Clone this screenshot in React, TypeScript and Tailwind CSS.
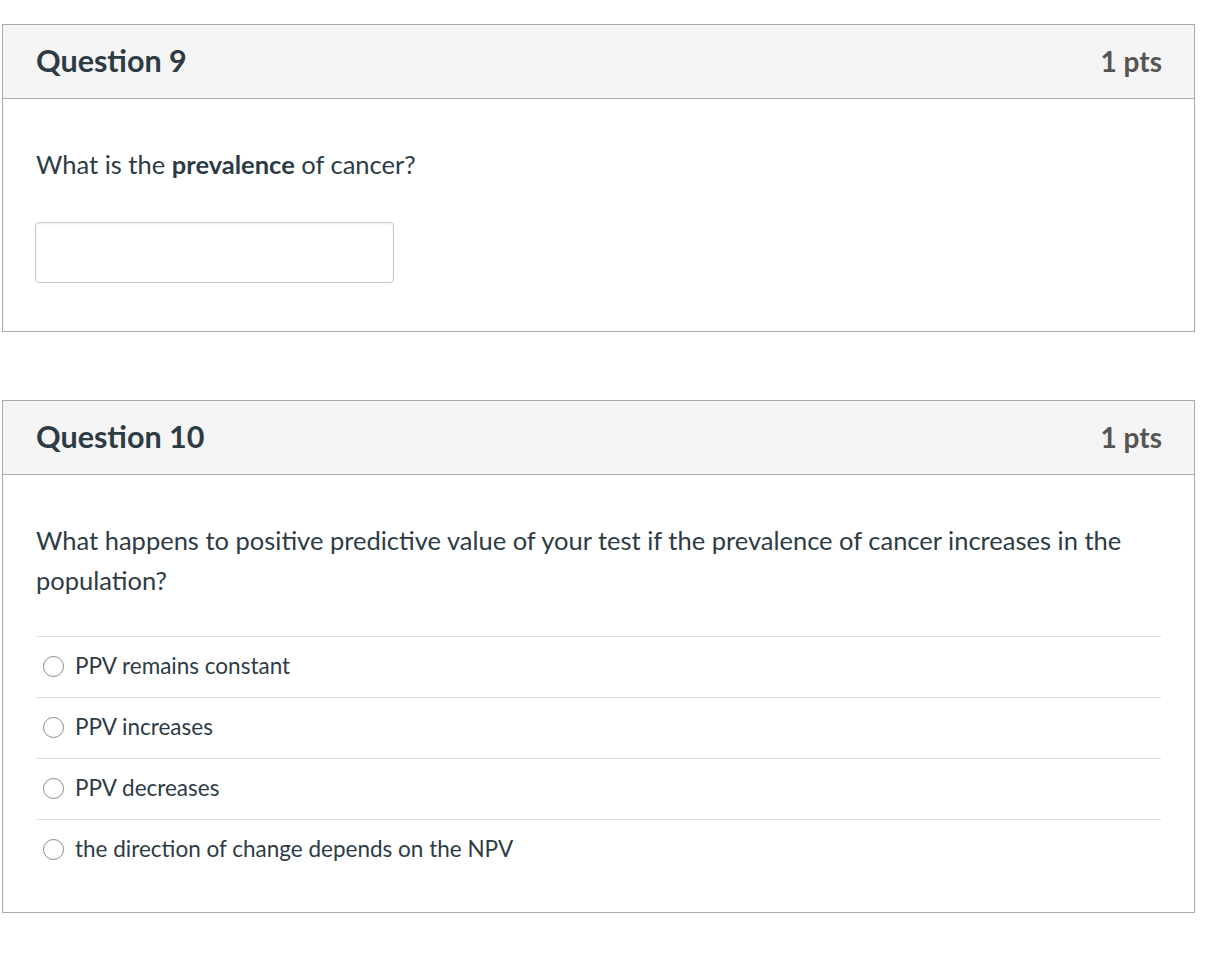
import React from "react";

function Radio({ label }: { label: string }) {
  return (
    <div className="flex h-[61px] items-center border-t border-[#dddddd] pb-[3px] pl-[7px]">
      <span className="mr-[11px] mt-[2px] inline-block h-[21px] w-[21px] shrink-0 rounded-full border border-[#8a8a8a] bg-white" />
      <span className="text-[22.5px] text-[#2d3b45]">{label}</span>
    </div>
  );
}

function Header({ title }: { title: string }) {
  return (
    <div className="flex h-[74px] items-center justify-between border-b border-[#aaaaaa] bg-[#f5f5f5] pb-[1px] pl-[33px] pr-[32px]">
      <h2 className="text-[30.5px] font-bold text-[#2d3b45]">{title}</h2>
      <span className="text-[28px] font-bold text-[#555555]">1 pts</span>
    </div>
  );
}

export default function App() {
  return (
    <div className="min-h-[962px] bg-white pt-[24px] pl-[2px]" style={{ fontFamily: "Lato, 'Noto Sans', sans-serif" }}>
      <div className="w-[1193px] border border-[#aaaaaa]">
        <Header title="Question 9" />
        <div className="px-[33px] pt-[45px] pb-[48px]">
          <p className="text-[25.5px] leading-[40px] text-[#2d3b45]">
            What is the <strong className="font-bold">prevalence</strong> of cancer?
          </p>
          <input
            type="text"
            className="-ml-[1px] mt-[38px] block h-[61px] w-[359px] rounded-[4px] border border-[#c8c8c8] bg-white shadow-[inset_0_1px_2px_rgba(0,0,0,0.08)]"
          />
        </div>
      </div>

      <div className="mt-[68px] w-[1193px] border border-[#aaaaaa]">
        <Header title="Question 10" />
        <div className="px-[33px] pt-[45px] pb-[32px]">
          <p className="text-[25.5px] leading-[40px] text-[#2d3b45]">
            What happens to positive predictive value of your test if the prevalence of cancer increases in the population?
          </p>
          <div className="mt-[36px]">
            <Radio label="PPV remains constant" />
            <Radio label="PPV increases" />
            <Radio label="PPV decreases" />
            <Radio label="the direction of change depends on the NPV" />
          </div>
        </div>
      </div>
    </div>
  );
}
